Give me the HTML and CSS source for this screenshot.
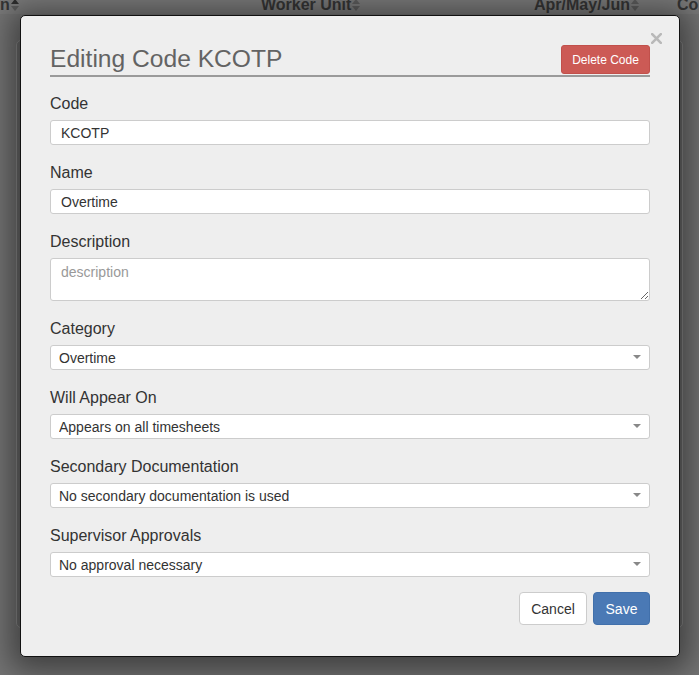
FILE: index.html
```html
<!DOCTYPE html>
<html lang="en">
<head>
<meta charset="utf-8">
<title>Editing Code KCOTP</title>
<link rel="stylesheet" href="styles.css">
</head>
<body>
<div class="page">
  <div class="thead">
    <div class="th th-first"><span class="th-text">n</span><span class="sort sort-up"><svg width="8" height="12" viewBox="0 0 8 12"><path d="M0 5 L4 0 L8 5 Z" fill="#2e2e2e"/><path d="M0 7 L4 12 L8 7 Z" fill="#5c5c5c"/></svg></span></div>
    <div class="th th-worker"><span class="th-text">Worker Unit</span><span class="sort"><svg width="8" height="12" viewBox="0 0 8 12"><path d="M0 5 L4 0 L8 5 Z" fill="#5c5c5c"/><path d="M0 7 L4 12 L8 7 Z" fill="#5c5c5c"/></svg></span></div>
    <div class="th th-quarter"><span class="th-text">Apr/May/Jun</span><span class="sort"><svg width="8" height="12" viewBox="0 0 8 12"><path d="M0 5 L4 0 L8 5 Z" fill="#5c5c5c"/><path d="M0 7 L4 12 L8 7 Z" fill="#5c5c5c"/></svg></span></div>
    <div class="th th-last"><span class="th-text">Co</span></div>
  </div>
  <div class="panel"></div>
</div>

<div class="modal">
  <button class="close" type="button" aria-label="Close"><svg width="11" height="11" viewBox="0 0 11 11"><path d="M1.2 1.2 L9.8 9.8 M9.8 1.2 L1.2 9.8" stroke="#b9b9b9" stroke-width="2.6" stroke-linecap="square"/></svg></button>
  <div class="modal-header">
    <h2 class="modal-title">Editing Code KCOTP</h2>
    <button class="btn btn-danger" type="button">Delete Code</button>
  </div>
  <form class="form">
    <div class="group">
      <label class="label">Code</label>
      <input class="control" type="text" value="KCOTP">
    </div>
    <div class="group">
      <label class="label">Name</label>
      <input class="control" type="text" value="Overtime">
    </div>
    <div class="group">
      <label class="label">Description</label>
      <textarea class="control area" placeholder="description"></textarea>
    </div>
    <div class="group">
      <label class="label">Category</label>
      <div class="select-wrap">
        <select class="control select"><option>Overtime</option></select>
        <svg class="caret" width="8" height="4" viewBox="0 0 8 4"><path d="M0 0 L8 0 L4 4 Z" fill="#888"/></svg>
      </div>
    </div>
    <div class="group">
      <label class="label">Will Appear On</label>
      <div class="select-wrap">
        <select class="control select"><option>Appears on all timesheets</option></select>
        <svg class="caret" width="8" height="4" viewBox="0 0 8 4"><path d="M0 0 L8 0 L4 4 Z" fill="#888"/></svg>
      </div>
    </div>
    <div class="group">
      <label class="label">Secondary Documentation</label>
      <div class="select-wrap">
        <select class="control select"><option>No secondary documentation is used</option></select>
        <svg class="caret" width="8" height="4" viewBox="0 0 8 4"><path d="M0 0 L8 0 L4 4 Z" fill="#888"/></svg>
      </div>
    </div>
    <div class="group last">
      <label class="label">Supervisor Approvals</label>
      <div class="select-wrap">
        <select class="control select"><option>No approval necessary</option></select>
        <svg class="caret" width="8" height="4" viewBox="0 0 8 4"><path d="M0 0 L8 0 L4 4 Z" fill="#888"/></svg>
      </div>
    </div>
    <div class="actions">
      <button class="btn btn-default" type="button">Cancel</button>
      <button class="btn btn-primary" type="button">Save</button>
    </div>
  </form>
</div>
</body>
</html>
```
FILE: styles.css
```css
* { box-sizing: border-box; }

html, body {
  margin: 0;
  padding: 0;
}

body {
  width: 699px;
  height: 675px;
  overflow: hidden;
  background: #747474;
  font-family: "Liberation Sans", Arial, Helvetica, sans-serif;
  position: relative;
}

.page {
  height: 675px;
}

.thead {
  height: 14px;
  display: flex;
  overflow: hidden;
  background: #7a7a7a;
}

.th {
  display: flex;
  align-items: flex-start;
  margin-top: -3px;
  font-weight: bold;
  font-size: 16px;
  line-height: 16px;
  color: #353535;
  white-space: nowrap;
}

.sort {
  display: inline-flex;
  margin-left: 1px;
  margin-top: 2px;
}

.th-first { width: 261px; }
.th-worker { width: 273px; }
.th-quarter { width: 143px; }

.panel {
  margin: 26px 16px 0 16px;
  height: 588px;
  border: 1px solid #8c8c8c;
  border-radius: 5px;
  background: #6c6c6c;
}

.modal {
  position: absolute;
  left: 20px;
  top: 15px;
  width: 660px;
  background: #eeeeee;
  border: 1px solid #111;
  border-radius: 5px;
  padding: 29px 29px 31px 29px;
  box-shadow: 0 4px 30px 10px rgba(0, 0, 0, 0.45);
}

.close {
  position: absolute;
  top: 17px;
  right: 17px;
  width: 11px;
  height: 11px;
  padding: 0;
  border: 0;
  background: none;
  display: flex;
}

.modal-header {
  display: flex;
  align-items: flex-end;
  justify-content: space-between;
  padding-bottom: 1px;
  border-bottom: 2px solid #9a9a9a;
}

.modal-title {
  margin: 0;
  padding-bottom: 2px;
  font-size: 24.6px;
  line-height: 26px;
  font-weight: normal;
  color: #636363;
}

.btn {
  font-family: "Liberation Sans", Arial, Helvetica, sans-serif;
  border-radius: 4px;
  cursor: pointer;
}

.btn-danger {
  width: 89px;
  height: 29px;
  padding: 0;
  font-size: 12px;
  color: #fff;
  background: #cc5a55;
  border: 1px solid #c1504b;
  border-radius: 3px;
}

.form {
  margin: 16px 0 0 0;
}

.group {
  margin-bottom: 17px;
}

.group.last {
  margin-bottom: 15px;
}

.label {
  display: block;
  font-size: 16px;
  line-height: 20px;
  color: #333;
  padding-top: 1px;
  margin-bottom: 6px;
}

.control {
  display: block;
  width: 100%;
  height: 25px;
  margin: 0;
  padding: 1px 10px 0 10px;
  font-family: "Liberation Sans", Arial, Helvetica, sans-serif;
  font-size: 14px;
  color: #333;
  background: #fff;
  border: 1px solid #cccccc;
  border-radius: 3px;
  outline: none;
}

.area {
  height: 43px;
  padding: 4px 10px;
  line-height: 18px;
  resize: vertical;
}

.area::placeholder {
  color: #999;
}

.select-wrap {
  position: relative;
}

.select {
  appearance: none;
  -webkit-appearance: none;
  padding: 1px 24px 0 8px;
}

.caret {
  position: absolute;
  right: 9px;
  top: 10px;
  pointer-events: none;
}

.actions {
  display: flex;
  justify-content: flex-end;
  gap: 6px;
}

.btn-default,
.btn-primary {
  height: 33px;
  font-size: 14px;
  padding: 0;
}

.btn-default {
  width: 68px;
  color: #333;
  background: #fff;
  border: 1px solid #cccccc;
}

.btn-primary {
  width: 57px;
  color: #fff;
  background: #4a79b5;
  border: 1px solid #4170ab;
}
```
